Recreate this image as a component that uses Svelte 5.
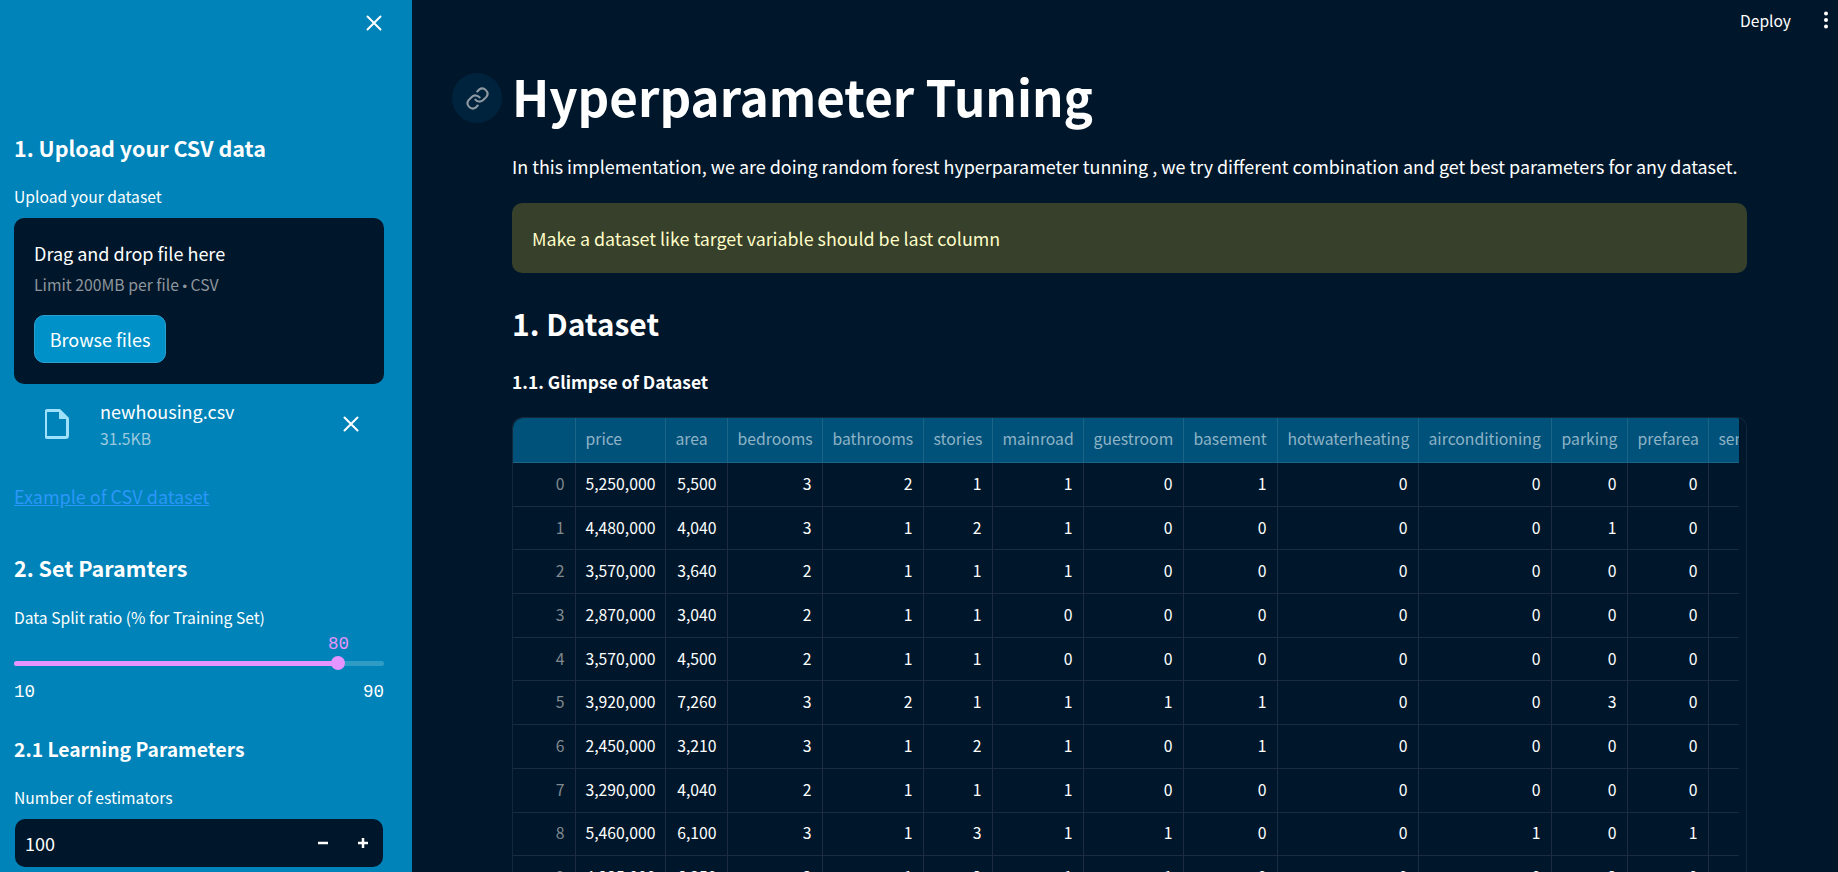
<script>
  const columns = [
    { name: '', w: 62 }, { name: 'price', w: 90 }, { name: 'area', w: 62 }, { name: 'bedrooms', w: 95 },
    { name: 'bathrooms', w: 101 }, { name: 'stories', w: 69 }, { name: 'mainroad', w: 91 }, { name: 'guestroom', w: 100 },
    { name: 'basement', w: 94 }, { name: 'hotwaterheating', w: 141 }, { name: 'airconditioning', w: 133 },
    { name: 'parking', w: 76 }, { name: 'prefarea', w: 81 }, { name: 'semi-furnished', w: 120.500 }
  ];
  const rows = [
    ['5,250,000','5,500',3,2,1,1,0,1,0,0,0,0],
    ['4,480,000','4,040',3,1,2,1,0,0,0,0,1,0],
    ['3,570,000','3,640',2,1,1,1,0,0,0,0,0,0],
    ['2,870,000','3,040',2,1,1,0,0,0,0,0,0,0],
    ['3,570,000','4,500',2,1,1,0,0,0,0,0,0,0],
    ['3,920,000','7,260',3,2,1,1,1,1,0,0,3,0],
    ['2,450,000','3,210',3,1,2,1,0,1,0,0,0,0],
    ['3,290,000','4,040',2,1,1,1,0,0,0,0,0,0],
    ['5,460,000','6,100',3,1,3,1,1,0,0,1,0,1],
    ['4,235,000','6,350',3,1,2,1,1,0,0,0,2,0]
  ];
</script>

<div class="page">
  <aside class="sidebar">
    <button class="close" aria-label="Close sidebar">
      <svg viewBox="0 0 24 24" width="24" height="24"><path d="M5.500 5.500l13 13M18.500 5.500l-13 13" /></svg>
    </button>
    <h3 class="upload-title">1. Upload your CSV data</h3>
    <div class="label first">Upload your dataset</div>
    <section class="dropzone">
      <div class="drag">Drag and drop file here</div>
      <div class="limit">Limit 200MB per file <span class="bullet">•</span> CSV</div>
      <button class="browse">Browse files</button>
    </section>
    <div class="file">
      <svg class="file-icon" viewBox="0 0 24 30" width="24" height="30"><path d="M2.500 1.500h12l8 8v17a2 2 0 0 1-2 2h-18a2 2 0 0 1-2-2v-23a2 2 0 0 1 2-2z" fill="none" /><path class="fold" d="M14 1l9 9h-9z" /></svg>
      <div class="file-text">
        <div class="file-name">newhousing.csv</div>
        <div class="file-size">31.5KB</div>
      </div>
      <svg class="file-x" viewBox="0 0 24 24" width="24" height="24"><path d="M5.500 5.500l13 13M18.500 5.500l-13 13" /></svg>
    </div>
    <a class="example" href="#top">Example of CSV dataset</a>
    <h3 class="params-title">2. Set Paramters</h3>
    <div class="label split">Data Split ratio (% for Training Set)</div>
    <div class="slider">
      <div class="value-row"><span class="slider-value">80</span></div>
      <div class="track"><div class="fill"></div><div class="thumb"></div></div>
      <div class="ticks"><span>10</span><span>90</span></div>
    </div>
    <h3 class="learn-title">2.1 Learning Parameters</h3>
    <div class="label estimators">Number of estimators</div>
    <div class="number">
      <span>100</span>
      <div class="steps">
        <svg viewBox="0 0 16 16" width="16" height="16"><path d="M3 8h10" /></svg>
        <svg viewBox="0 0 16 16" width="16" height="16"><path d="M3 8h10M8 3v10" /></svg>
      </div>
    </div>
  </aside>

  <main class="main">
    <header class="topbar">
      <span class="deploy">Deploy</span>
      <svg class="dots" viewBox="0 0 6 18" width="6" height="18"><circle cx="3" cy="2.500" r="2" /><circle cx="3" cy="9" r="2" /><circle cx="3" cy="15.500" r="2" /></svg>
    </header>
    <div class="content">
      <div class="title-row">
        <span class="anchor">
          <svg viewBox="0 0 24 24" width="25" height="25"><path d="M10 13a5 5 0 0 0 7.500.5l3-3a5 5 0 0 0-7-7l-1.700 1.700" /><path d="M14 11a5 5 0 0 0-7.500-.5l-3 3a5 5 0 0 0 7 7l1.700-1.700" /></svg>
        </span>
        <h1>Hyperparameter Tuning</h1>
      </div>
      <p class="intro">In this implementation, we are doing random forest hyperparameter tunning , we try different combination and get best parameters for any dataset.</p>
      <div class="warning">Make a dataset like target variable should be last column</div>
      <h2>1. Dataset</h2>
      <div class="glimpse">1.1. Glimpse of Dataset</div>
      <div class="table-frame">
        <div class="table-clip">
          <table>
            <colgroup>
              {#each columns as c}<col style="width:{c.w}px" />{/each}
            </colgroup>
            <thead>
              <tr>{#each columns as c}<th>{c.name}</th>{/each}</tr>
            </thead>
            <tbody>
              {#each rows as row, i}
                <tr>
                  <td class="idx">{i}</td>
                  {#each row as v}<td>{v}</td>{/each}
                  <td></td>
                </tr>
              {/each}
            </tbody>
          </table>
        </div>
      </div>
    </div>
  </main>
</div>

<style>
  :global(body) { margin: 0; background: #00172b; }
  .page {
    display: flex;
    width: 1838px;
    height: 872px;
    overflow: hidden;
    font-family: "Noto Sans CJK SC", "Noto Sans", sans-serif;
    color: #fff;
    background: #00172b;
  }
  .sidebar {
    width: 412px;
    flex: none;
    box-sizing: border-box;
    background: #0083b8;
    padding: 0 28px 0 14px;
    position: relative;
  }
  .close {
    position: absolute;
    top: 11px;
    left: 362px;
    padding: 0;
    border: 0;
    background: none;
    width: 24px;
    height: 24px;
  }
  svg path { stroke-linecap: round; }
  .close path, .file-x path { stroke: #fff; stroke-width: 2; fill: none; }
  h3 {
    margin: 0;
    font-size: 21.500px;
    line-height: 32px;
    font-weight: 700;
  }
  .upload-title { padding-top: 132px; }
  .label {
    font-size: 15.650px;
    line-height: 22px;
  }
  .label.first { margin-top: 22px; }
  .label.split { margin-top: 23.500px; }
  .label.estimators { margin-top: 22px; }
  .dropzone {
    margin-top: 10px;
    height: 166px;
    box-sizing: border-box;
    background: #00172b;
    border-radius: 10px;
    padding: 21px 20px 0;
  }
  .drag { font-size: 18px; line-height: 28px; }
  .limit { font-size: 15.750px; line-height: 24px; margin-top: 6px; color: #8f959b; }
  .bullet { font-family: "Liberation Sans", sans-serif; font-size: 13px; }
  .browse {
    display: block;
    margin-top: 16px;
    width: 132px;
    height: 48px;
    padding: 0;
    border-radius: 10px;
    background: #0091c8;
    border: 1px solid #2a9fd0;
    color: #fff;
    font: inherit;
    font-size: 18px;
  }
  .file {
    display: flex;
    align-items: center;
    height: 66px;
    margin-top: 6.800px;
    padding-left: 31px;
  }
  .file-icon path { stroke: #9fe0fb; stroke-width: 3; stroke-linejoin: round; }
  .file-icon .fold { fill: #9fe0fb; stroke: none; }
  .file-text { margin-left: 31px; flex: 1; }
  .file-name { font-size: 18px; line-height: 28px; }
  .file-size { font-size: 15.750px; line-height: 22px; color: #9cc9de; margin-top: 3px; }
  .file-x { margin-right: 21px; }
  .example {
    display: block;
    margin-top: 25px;
    font-size: 18px;
    line-height: 28px;
    color: #2b97fa;
  }
  .params-title { margin-top: 42px; }
  .slider { margin-top: 4.200px; }
  .value-row { height: 22px; position: relative; }
  .slider-value {
    position: absolute;
    left: 314px;
    top: 0;
    font-family: "Liberation Mono", monospace;
    font-size: 17.500px;
    line-height: 22px;
    color: #e694ff;
  }
  .track {
    height: 5px;
    border-radius: 3px;
    background: #2f9cc6;
    position: relative;
    margin-top: 6px;
  }
  .fill { width: 324px; height: 100%; background: #e694ff; border-radius: 3px; }
  .thumb {
    position: absolute;
    left: 317px;
    top: -5px;
    width: 14px;
    height: 14px;
    border-radius: 50%;
    background: #e694ff;
  }
  .ticks {
    display: flex;
    justify-content: space-between;
    margin-top: 14.500px;
    font-family: "Liberation Mono", monospace;
    font-size: 17.500px;
    line-height: 22px;
  }
  .learn-title { margin-top: 30px; font-size: 19.300px; }
  .number {
    display: flex;
    align-items: center;
    justify-content: space-between;
    margin: 10px 1px 0;
    height: 48px;
    border-radius: 10px;
    background: #00172b;
    padding: 0 12px 0 10px;
    font-size: 18px;
  }
  .steps { display: flex; gap: 24px; }
  .steps path { stroke: #fff; stroke-width: 2.500; fill: none; stroke-linecap: butt; }

  .main { flex: 1; min-width: 0; position: relative; }
  .topbar {
    height: 40px;
    display: flex;
    align-items: center;
    justify-content: flex-end;
    gap: 32px;
    padding-right: 9px;
  }
  .deploy { font-size: 15.600px; line-height: 22px; }
  .dots { fill: #fff; }
  .content { padding: 0 91px 0 100px; }
  .title-row { position: relative; height: 122px; }
  .anchor {
    position: absolute;
    left: -60px;
    top: 33px;
    width: 50px;
    height: 50px;
    border-radius: 50%;
    background: #00233d;
    display: flex;
    align-items: center;
    justify-content: center;
  }
  .anchor path { stroke: #8f9aa3; stroke-width: 2; fill: none; }
  h1 {
    margin: 0;
    padding-top: 23px;
    font-size: 49.300px;
    line-height: 66px;
    font-weight: 700;
  }
  .intro {
    margin: -10px 0 0;
    font-size: 17.920px;
    line-height: 28px;
    white-space: nowrap;
  }
  .warning {
    margin-top: 23px;
    height: 70px;
    display: flex;
    align-items: center;
    padding-left: 20px;
    background: #36402a;
    border-radius: 10px;
    color: #fffdc8;
    font-size: 17.870px;
  }
  h2 {
    margin: 0;
    padding-top: 27px;
    font-size: 30px;
    line-height: 46px;
    font-weight: 700;
  }
  .glimpse {
    margin-top: 24.500px;
    font-size: 17.400px;
    line-height: 22px;
    font-weight: 700;
  }
  .table-frame {
    margin-top: 24px;
    border: 1px solid #12283c;
    border-bottom: 0;
    border-radius: 10px 10px 0 0;
    box-sizing: border-box;
    padding-right: 7px;
    height: 480px;
    overflow: hidden;
  }
  .table-clip { overflow: hidden; height: 100%; border-radius: 10px 0 0 0; }
  table {
    border-collapse: collapse;
    table-layout: fixed;
    width: 1316px;
    font-size: 15.750px;
  }
  th {
    height: 45px;
    padding: 0 10px 2px;
    box-sizing: border-box;
    background: #00527a;
    color: #8eb3c6;
    font-weight: 400;
    text-align: left;
    white-space: nowrap;
    overflow: hidden;
    border-right: 1px solid #1a6488;
    border-bottom: 1px solid #1a6488;
  }
  td {
    height: 43.700px;
    box-sizing: border-box;
    padding: 0 10px 2px;
    text-align: right;
    border-right: 1px solid #1a2c3e;
    border-bottom: 1px solid #1a2c3e;
    white-space: nowrap;
  }
  .idx { color: #80898f; }
</style>
